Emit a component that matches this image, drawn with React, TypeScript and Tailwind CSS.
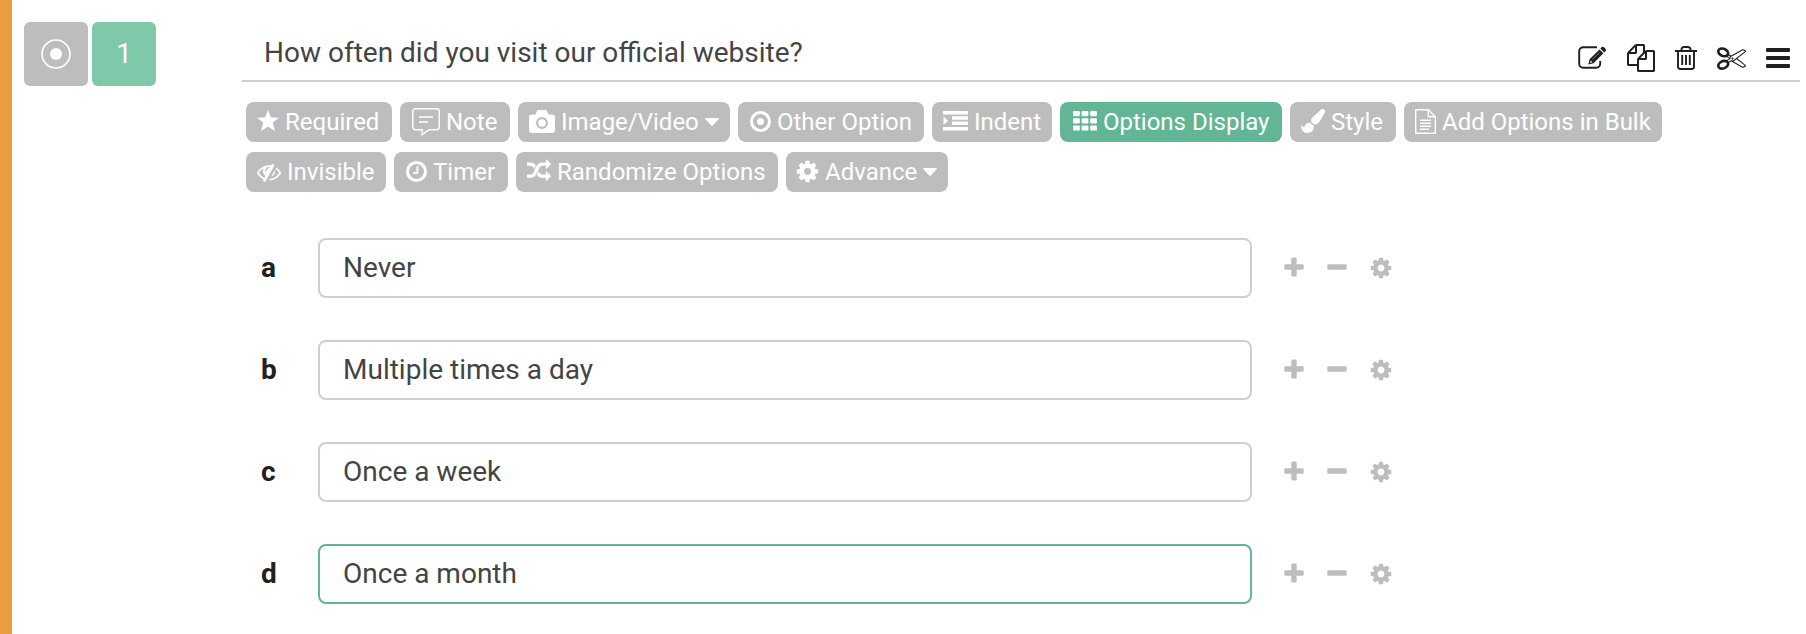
import React, { type ReactNode } from "react";

type IconProps = { className?: string };

function Glyph({ d, className }: { d: string; className?: string }) {
  return (
    <svg viewBox="0 0 1792 1792" fill="currentColor" className={`shrink-0 ${className ?? ""}`}>
      <path d={d} />
    </svg>
  );
}

const COG =
  "M1152 896q0-106-75-181t-181-75-181 75-75 181 75 181 181 75 181-75 75-181zm512-109v222q0 12-8 23t-20 13l-185 28q-19 54-39 91 35 50 107 138 10 12 10 25t-9 23q-27 37-99 108t-94 71q-12 0-26-9l-138-108q-44 23-91 38-16 136-29 186-7 28-36 28h-222q-14 0-24.5-8.5t-11.5-21.5l-28-184q-49-16-90-37l-141 107q-10 9-25 9-14 0-25-11-126-114-165-168-7-10-7-23 0-12 8-23 15-21 51-66.5t54-70.5q-27-50-41-99l-183-27q-13-2-21-12.5t-8-23.5v-222q0-12 8-23t19-13l186-28q14-46 39-92-40-57-107-138-10-12-10-24 0-10 9-23 26-36 98.5-107.5t94.5-71.5q13 0 26 10l138 107q44-23 91-38 16-136 29-186 7-28 36-28h222q14 0 24.5 8.5t11.5 21.5l28 184q49 16 90 37l142-107q9-9 24-9 13 0 25 10 129 119 165 170 7 8 7 22 0 12-8 23-15 21-51 66.5t-54 70.5q26 50 41 98l183 28q13 2 21 12.5t8 23.5z";
const SCISSORS =
  "M960 896q26 0 45 19t19 45-19 45-45 19-45-19-19-45 19-45 45-19zm300 64l507 398q28 20 25 56-5 35-35 51l-128 64q-13 7-29 7-17 0-31-8l-690-387-110 66q-8 4-12 5 14 49 10 97-7 77-56 147.5t-132 123.5q-132 84-277 84-136 0-222-78-90-84-79-207 7-76 56-147t131-124q132-84 278-84 83 0 151 31 9-13 22-22l122-73-122-73q-13-9-22-22-68 31-151 31-146 0-278-84-82-53-131-124t-56-147q-5-59 15.5-113t63.5-93q85-79 222-79 145 0 277 84 83 52 132 123t56 148q4 48-10 97 4 1 12 5l110 66 690-387q14-8 31-8 16 0 29 7l128 64q30 16 35 51 3 36-25 56zm-681-260q46-42 21-108t-106-117q-92-59-192-59-74 0-113 36-46 42-21 108t106 117q92 59 192 59 74 0 113-36zm-85 745q81-51 106-117t-21-108q-39-36-113-36-100 0-192 59-81 51-106 117t21 108q39 36 113 36 100 0 192-59zm178-613l96 58v-11q0-36 33-56l14-8-79-44-26 26q-3 3-10 11t-12 12q-2 2-4 3.5t-3 2.5zm224 224l96 32 736-576-128-64-768 431v113l-160 96 9 8q2 2 7 6 4 4 11 12t11 12l26 26zm704 416l128-64-520-408-177 138q-2 3-13 7z";
const SHUFFLE =
  "M666 481q-60 92-137 273-22-45-37-72.5t-40.5-63.5-51-56.5-63-35-81.5-14.5h-224q-14 0-23-9t-9-23v-192q0-14 9-23t23-9h224q250 0 410 225zm1126 799q0 14-9 23l-320 320q-9 9-23 9-13 0-22.5-9.5t-9.5-22.5v-192q-32 0-85 .5t-81 1-73-1-71-5-64-10.5-63-18.5-58-28.5-59-40-55-53.5-56-69.5q59-93 136-273 22 45 37 72.5t40.5 63.5 51 56.5 63 35 81.5 14.5h256v-192q0-14 9-23t23-9q12 0 24 10l319 319q9 9 9 23zm0-896q0 14-9 23l-320 320q-9 9-23 9-13 0-22.5-9.5t-9.5-22.5v-192h-256q-48 0-87 15t-69 45-51 61.5-45 77.5q-32 62-78 171-29 66-49.5 111t-54 105-64 100-74 83-90 68.5-106.5 42-128 16.5h-224q-14 0-23-9t-9-23v-192q0-14 9-23t23-9h224q48 0 87-15t69-45 51-61.5 45-77.5q32-62 78-171 29-66 49.5-111t54-105 64-100 74-83 90-68.5 106.5-42 128-16.5h256v-192q0-14 9-23t23-9q12 0 24 10l319 319q9 9 9 23z";
const BRUSH =
  "M1615 0q70 0 122.5 46.5t52.5 116.5q0 63-45 151-332 629-465 752-97 91-218 91-126 0-216.5-92.5t-90.5-219.5q0-128 92-212l638-579q59-54 130-54zm-909 1034q39 76 106.5 130t150.5 76l1 71q4 213-129.5 347t-348.5 134q-123 0-218-46.5t-152.5-127.5-86.5-183-29-220q7 5 41 30t62 44.5 59 36.5 46 17q41 0 55-37 25-66 57.5-112.5t69.5-76 88-47.5 103-25.5 125-10.5z";
const EYE_SLASH =
  "M555 1335l78-141q-87-63-136-159t-49-203q0-121 61-225-229 117-381 353 167 258 427 375zm389-759q0-20-14-34t-34-14q-125 0-214.5 89.5t-89.5 214.5q0 20 14 34t34 14 34-14 14-34q0-86 61-147t147-61q20 0 34-14t14-34zm363-191q0 7-1 9-106 189-316 567t-315 566l-49 89q-10 16-28 16-12 0-134-70-16-10-16-28 0-12 44-87-143-65-263.5-173t-208.5-245q-20-31-20-69t20-69q153-235 380-371t496-136q89 0 180 17l54-97q10-16 28-16 5 0 18 6t31 15.5 33 18.5 31.5 18.5 19.5 11.5q16 10 16 27zm37 447q0 139-79 253.5t-209 164.5l280-502q8 45 8 84zm448 128q0 35-20 69-39 64-109 145-150 172-347.5 267t-419.5 95l74-132q212-18 392.5-137t301.5-307q-115-179-282-294l63-112q95 64 182.5 153t144.5 184q20 34 20 69z";
const FILES =
  "M1696 384q40 0 68 28t28 68v1216q0 40-28 68t-68 28h-960q-40 0-68-28t-28-68v-288h-544q-40 0-68-28t-28-68v-672q0-40 20-88t48-76l408-408q28-28 76-48t88-20h416q40 0 68 28t28 68v328q68-40 128-40h416zm-544 213l-299 299h299v-299zm-640-384l-299 299h299v-299zm196 647l316-316v-416h-384v416q0 40-28 68t-68 28h-416v640h512v-256q0-40 20-88t48-76zm956 804v-1152h-384v416q0 40-28 68t-68 28h-416v640h896z";

function Star() {
  return (
    <svg viewBox="0 0 22 21" fill="currentColor" className="mb-[3px] h-[21px] w-[22px] shrink-0">
      <path d="M11 0l2.900 7.300 8.100.4-6.300 5.100 2.300 8.200L11 16.600 4 21l2.300-8.200L0 7.700l8.100-.4z" />
    </svg>
  );
}

function NoteIcon() {
  return (
    <svg viewBox="0 0 28 28" fill="none" stroke="currentColor" strokeWidth="1.400" className="h-[28px] w-[28px] shrink-0">
      <path d="M3.500.8h21a2.700 2.700 0 0 1 2.700 2.700v15.500a2.700 2.700 0 0 1-2.700 2.700H17l-6.800 5v-5H3.500A2.700 2.700 0 0 1 .8 19V3.500A2.700 2.700 0 0 1 3.500.8z" />
      <path d="M7 9h14M7 14h9" />
    </svg>
  );
}

function Camera() {
  return (
    <svg viewBox="0 0 26 23" fill="currentColor" fillRule="evenodd" className="mb-[2px] h-[23px] w-[26px] shrink-0">
      <path d="M9.500 0h7q1 0 1.500 1l1.500 3.500H23q3 0 3 3V20q0 3-3 3H3q-3 0-3-3V7.500q0-3 3-3h3.500L8 1q.5-1 1.500-1zM13 7a6 6 0 1 0 0 12 6 6 0 0 0 0-12zm0 2.200a3.800 3.800 0 1 1 0 7.600 3.800 3.800 0 0 1 0-7.600z" />
    </svg>
  );
}

function DotCircle() {
  return (
    <svg viewBox="0 0 21 21" className="mb-px size-[21px] shrink-0">
      <circle cx="10.500" cy="10.500" r="9" fill="none" stroke="currentColor" strokeWidth="3" />
      <circle cx="10.500" cy="10.500" r="3.600" fill="currentColor" />
    </svg>
  );
}

function IndentIcon() {
  return (
    <svg viewBox="0 0 25 20" fill="currentColor" className="mb-[2px] h-[20px] w-[25px] shrink-0">
      <rect x="0" y="0" width="25" height="3.500" rx=".6" />
      <rect x="9" y="5.300" width="16" height="3.500" rx=".6" />
      <rect x="9" y="10.600" width="16" height="3.500" rx=".6" />
      <rect x="0" y="15.900" width="25" height="3.500" rx=".6" />
      <path d="M.5 5.300 5 9.700.5 14.100z" />
    </svg>
  );
}

function GridIcon() {
  return (
    <svg viewBox="0 0 24 20" fill="currentColor" className="mb-[2px] h-[20px] w-[24px] shrink-0">
      {[0, 7.2, 14.4].map((y) =>
        [0, 8.6, 17.2].map((x) => <rect key={`${x}-${y}`} x={x} y={y} width="6.800" height="5.200" rx="1.200" />),
      )}
    </svg>
  );
}

function DocIcon() {
  return (
    <svg viewBox="0 0 21 25" fill="none" stroke="currentColor" strokeWidth="1.400" className="mb-px h-[25px] w-[21px] shrink-0">
      <path d="M.7.7h12.600l7 7v16.600H.7zM13.300.7v7h7M5 11.200h11M5 14.200h11M5 17.200h11M5 20.200h9" />
    </svg>
  );
}

function ClockIcon() {
  return (
    <svg viewBox="0 0 21 21" fill="none" stroke="currentColor" className="mb-px size-[21px] shrink-0">
      <circle cx="10.500" cy="10.500" r="9" strokeWidth="3" />
      <path d="M11.400 5v6.800H7" strokeWidth="1.700" />
    </svg>
  );
}

function Caret({ className }: IconProps) {
  return (
    <svg viewBox="0 0 14 8" fill="currentColor" className={`h-[8px] w-[14px] shrink-0 ${className ?? ""}`}>
      <path d="M.9 0h12.200q1.200.2.500 1.200L7.800 7.500q-.8.7-1.600 0L.4 1.200Q-.3.2.9 0z" />
    </svg>
  );
}

function EditIcon() {
  return (
    <svg viewBox="0 0 29 23" className="h-[23px] w-[29px]">
      <path
        d="M19 1.200H5.200a4 4 0 0 0-4 4v12.600a4 4 0 0 0 4 4h13a4 4 0 0 0 4-4V15"
        fill="none"
        stroke="currentColor"
        strokeWidth="1.900"
      />
      <path
        d="M22.300 2.600 23.800 1.100q1-.9 1.900 0l2 2q.9.900 0 1.900L26.200 6.500zM21.500 3.400l3.900 3.900L15.500 17.200l-5.200 1.400 1.300-5.300zM12.700 14.600l-.7 2.300 2.400-.6z"
        fill="currentColor"
        fillRule="evenodd"
      />
      <path d="m14.500 13.500 7-7" stroke="#fff" strokeWidth=".4" />
    </svg>
  );
}

function TrashIcon() {
  return (
    <svg viewBox="0 0 22 24" fill="none" stroke="currentColor" strokeWidth="1.900" className="h-[24px] w-[22px]">
      <path d="M0 5h22M6.500 5V3.500A2.500 2.500 0 0 1 9 1h4a2.500 2.500 0 0 1 2.500 2.500V5M3 5v15.500A2.500 2.500 0 0 0 5.500 23h11a2.500 2.500 0 0 0 2.500-2.500V5M7.200 9v10M11 9v10M14.800 9v10" />
    </svg>
  );
}

function MenuIcon() {
  return (
    <svg viewBox="0 0 24 20" fill="currentColor" className="h-[20px] w-[24px]">
      <rect width="24" height="4" rx="1.200" />
      <rect y="8" width="24" height="4" rx="1.200" />
      <rect y="16" width="24" height="4" rx="1.200" />
    </svg>
  );
}

type Tool = { label: string; icon: ReactNode; box: string; text: string; caret?: string; active?: boolean };

const rows: Tool[][] = [
  [
    { label: "Required", icon: <Star />, box: "w-[146px] pl-[11px]", text: "ml-[6px]" },
    { label: "Note", icon: <NoteIcon />, box: "w-[110px] pl-[12px]", text: "ml-[6px]" },
    { label: "Image/Video", icon: <Camera />, box: "w-[212px] pl-[11px]", text: "ml-[6px]", caret: "mr-[11px]" },
    { label: "Other Option", icon: <DotCircle />, box: "w-[186px] pl-[12px]", text: "ml-[6px]" },
    { label: "Indent", icon: <IndentIcon />, box: "w-[120px] pl-[11px]", text: "ml-[6px]" },
    { label: "Options Display", icon: <GridIcon />, box: "w-[222px] pl-[13px]", text: "ml-[6px]", active: true },
    { label: "Style", icon: <Glyph d={BRUSH} className="mb-[2px] size-[24px]" />, box: "w-[106px] pl-[11px]", text: "ml-[6px]" },
    { label: "Add Options in Bulk", icon: <DocIcon />, box: "w-[258px] pl-[11px]", text: "ml-[6px]" },
  ],
  [
    { label: "Invisible", icon: <Glyph d={EYE_SLASH} className="mb-px size-[24px]" />, box: "w-[140px] pl-[11px]", text: "ml-[6px]" },
    { label: "Timer", icon: <ClockIcon />, box: "w-[114px] pl-[12px]", text: "ml-[6px]" },
    { label: "Randomize Options", icon: <Glyph d={SHUFFLE} className="mb-[2px] size-[24px]" />, box: "w-[262px] pl-[11px]", text: "ml-[6px]" },
    { label: "Advance", icon: <Glyph d={COG} className="-mx-[2px] mb-px size-[25px]" />, box: "w-[162px] pl-[11px]", text: "ml-[7px]", caret: "mr-[11px]" },
  ],
];

function ToolButton({ tool }: { tool: Tool }) {
  return (
    <button
      className={`flex h-10 shrink-0 items-center rounded-lg text-white ${tool.active ? "bg-[#62b595]" : "bg-[#bdbdbd]"} ${tool.box}`}
    >
      {tool.icon}
      <span className={`text-[24px] leading-10 whitespace-nowrap ${tool.text}`}>{tool.label}</span>
      {tool.caret && <Caret className={`ml-auto ${tool.caret}`} />}
    </button>
  );
}

const options = [
  { key: "a", value: "Never" },
  { key: "b", value: "Multiple times a day" },
  { key: "c", value: "Once a week" },
  { key: "d", value: "Once a month", focused: true },
];

export default function App() {
  return (
    <div className="flex h-[634px] w-[1806px] overflow-hidden bg-white font-[Roboto,sans-serif] text-[#444]">
      <div className="w-3 shrink-0 bg-[#ec9c40]" />
      <div className="flex shrink-0 gap-1 pt-[22px] pl-3 text-white">
        <div className="flex size-16 items-center justify-center rounded-md bg-[#bdbdbd]">
          <svg viewBox="0 0 30 30" className="size-[30px]">
            <circle cx="15" cy="15" r="14" fill="none" stroke="currentColor" strokeWidth="1.700" />
            <circle cx="15" cy="15" r="6" fill="currentColor" />
          </svg>
        </div>
        <div className="flex size-16 items-center justify-center rounded-md bg-[#7fc8a9] text-[28px]">1</div>
      </div>

      <main className="ml-[86px] w-[1558px] shrink-0">
        <header className="flex h-[82px] items-start justify-between border-b-2 border-[#cfcfcf] pr-[10px] pl-[22px]">
          <h1 className="pt-[33px] text-[28px] leading-10 font-normal">How often did you visit our official website?</h1>
          <div className="flex items-center pt-[43px] text-[#1f1f1f]">
            <EditIcon />
            <Glyph d={FILES} className="ml-5 size-[28px]" />
            <span className="ml-5"><TrashIcon /></span>
            <Glyph d={SCISSORS} className="ml-5 size-[29px]" />
            <span className="ml-5"><MenuIcon /></span>
          </div>
        </header>

        <div className="flex flex-col gap-[10px] pt-5 pl-1">
          {rows.map((row, i) => (
            <div key={i} className="flex gap-2">
              {row.map((tool) => (
                <ToolButton key={tool.label} tool={tool} />
              ))}
            </div>
          ))}
        </div>

        <div className="flex flex-col gap-[42px] pt-[46px]">
          {options.map((o) => (
            <div key={o.key} className="flex h-[60px] items-center">
              <div className="w-[76px] pl-[19px] text-[28px] leading-none font-bold text-[#212121]">{o.key}</div>
              <div
                className={`flex h-[60px] w-[934px] items-center rounded-lg border-2 pl-[23px] text-[28px] ${
                  o.focused ? "border-[#62b595]" : "border-[#cfcfcf]"
                }`}
              >
                {o.value}
              </div>
              <div className="flex items-center pl-8 text-[#bdbdbd]">
                <svg viewBox="0 0 20 20" fill="currentColor" className="mb-[3px] size-5">
                  <rect x=".3" y="7.300" width="19.400" height="5.400" rx="1.300" />
                  <rect x="7.300" y=".5" width="5.400" height="19" rx="1.300" />
                </svg>
                <svg viewBox="0 0 20 20" fill="currentColor" className="mb-[3px] ml-[23px] size-5">
                  <rect x=".3" y="7.300" width="19.400" height="5.400" rx="1.300" />
                </svg>
                <Glyph d={COG} className="mb-px ml-[22px] size-[24px]" />
              </div>
            </div>
          ))}
        </div>
      </main>
    </div>
  );
}
